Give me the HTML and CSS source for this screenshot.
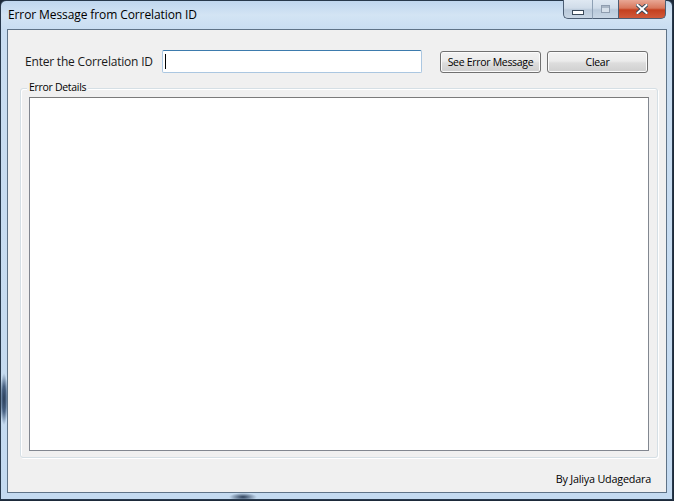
FILE: index.html
```html
<!DOCTYPE html>
<html>
<head>
<meta charset="utf-8">
<title>Error Message from Correlation ID</title>
<link rel="stylesheet" href="styles.css">
</head>
<body>
<div class="window">
  <div class="titlebar">
    <span class="title">Error Message from Correlation ID</span>
    <div class="caption">
      <div class="cap cap-min"><span class="min-glyph"></span></div>
      <div class="cap cap-max"><span class="max-glyph"></span></div>
      <div class="cap cap-close">
        <svg width="12" height="10" viewBox="0 0 12 10">
          <path d="M1.5 1 L10.5 9 M10.5 1 L1.5 9" stroke="#3b4a5a" stroke-width="4" stroke-linecap="square"/>
          <path d="M1.5 1 L10.5 9 M10.5 1 L1.5 9" stroke="#ffffff" stroke-width="2" stroke-linecap="square"/>
        </svg>
      </div>
    </div>
  </div>
  <div class="client">
    <div class="input-row">
      <label class="id-label">Enter the Correlation ID</label>
      <div class="textbox"><span class="caret"></span></div>
      <button class="btn btn-see">See Error Message</button>
      <button class="btn btn-clear">Clear</button>
    </div>
    <div class="group">
      <span class="legend">Error Details</span>
      <div class="details"></div>
    </div>
    <div class="footer">By Jaliya Udagedara</div>
  </div>
</div>
</body>
</html>
```
FILE: styles.css
```css
html, body {
  margin: 0;
  padding: 0;
}
body {
  width: 674px;
  height: 501px;
  background: #1d2a3a;
  overflow: hidden;
  font-family: "Open Sans", "Noto Sans", sans-serif;
}
.window {
  box-sizing: border-box;
  width: 673px;
  height: 500px;
  border: 1px solid #27384b;
  border-radius: 6px 6px 0 0;
  background:
    radial-gradient(ellipse 4px 26px at 3px 398px, #2b3e58 0%, #4a6384 50%, rgba(196,218,240,0) 100%),
    radial-gradient(ellipse 14px 4px at 242px 496px, #2b3e58 0%, rgba(196,218,240,0) 100%),
    linear-gradient(180deg, #bfd6ee 0px, #d3e4f4 14px, #c9ddf1 28px, #c4daf0 100%);
  padding: 0 5px 6px 6px;
  display: flex;
  flex-direction: column;
}
.titlebar {
  height: 28px;
  display: flex;
  align-items: flex-start;
  position: relative;
}
.title {
  font-size: 12px;
  color: #000;
  margin-left: 1px;
  margin-top: 5px;
  letter-spacing: -0.1px;
}
.caption {
  display: flex;
  margin-left: auto;
  margin-top: -1px;
  margin-right: 1px;
}
.cap {
  height: 19px;
  box-sizing: border-box;
  border: 1px solid #4c5e74;
  border-top: none;
  display: flex;
  align-items: center;
  justify-content: center;
}
.cap-min {
  width: 29px;
  border-radius: 0 0 0 5px;
  border-right: none;
  background: linear-gradient(180deg, #dfe8f2 0%, #d0dce9 45%, #b9c9da 55%, #c8d6e4 100%);
}
.cap-max {
  width: 26px;
  border-right: none;
  border-left: 1px solid #8ea0b4;
  background: linear-gradient(180deg, #dfe8f2 0%, #d0dce9 45%, #b9c9da 55%, #c8d6e4 100%);
}
.cap-close {
  width: 48px;
  border-radius: 0 0 5px 0;
  background: linear-gradient(180deg, #e8a795 0%, #d8775c 45%, #c4401f 55%, #d15a3a 100%);
}
.min-glyph {
  display: block;
  width: 10px;
  height: 3px;
  margin-top: 6px;
  background: #fff;
  border: 1px solid #3b4a5a;
}
.max-glyph {
  display: block;
  width: 7px;
  height: 6px;
  border: 1px solid #8f9daf;
  box-shadow: inset 0 2px 0 #aab7c6;
  background: #d6e0ea;
}
.client {
  flex: 1;
  border: 1px solid #5f7387;
  background: #f0f0f0;
  display: flex;
  flex-direction: column;
  padding: 20px 8px 0 12px;
}
.input-row {
  display: flex;
  align-items: center;
  height: 23px;
  padding-left: 5px;
}
.id-label {
  flex: none;
  width: 137px;
  font-size: 12px;
  color: #1a1a1a;
  letter-spacing: -0.2px;
}
.textbox {
  flex: none;
  box-sizing: border-box;
  width: 260px;
  height: 23px;
  background: #fff;
  border: 1px solid #abc7e1;
  border-top-color: #3d7bad;
  border-radius: 2px;
  display: flex;
  align-items: center;
  padding-left: 2px;
}
.caret {
  display: block;
  width: 1px;
  height: 15px;
  background: #000;
}
.btn {
  flex: none;
  box-sizing: border-box;
  width: 101px;
  height: 22px;
  border: 1px solid #707070;
  border-radius: 3px;
  background: linear-gradient(180deg, #f2f2f2 0%, #ebebeb 45%, #dddddd 55%, #cfcfcf 100%);
  box-shadow: inset 0 0 0 1px #fbfbfb;
  font-family: "Open Sans", "Noto Sans", sans-serif;
  font-size: 10.5px;
  letter-spacing: -0.3px;
  color: #000;
  padding: 0;
}
.btn-see {
  margin-left: 18px;
}
.btn-clear {
  margin-left: 6px;
}
.group {
  position: relative;
  box-sizing: border-box;
  margin-top: 15px;
  height: 370px;
  border: 1px solid #d5dfe5;
  border-radius: 3px;
  box-shadow: inset 1px 1px 0 #ffffff, 1px 1px 0 #ffffff;
  padding: 8px 8px 6px 8px;
}
.legend {
  position: absolute;
  top: -9px;
  left: 6px;
  padding: 0 2px 0 2px;
  background: #f0f0f0;
  font-size: 10.5px;
  letter-spacing: -0.3px;
  color: #000;
  line-height: 14px;
}
.details {
  box-sizing: border-box;
  height: 354px;
  background: #fff;
  border: 1px solid #828790;
  border-top-color: #7a7a7a;
}
.footer {
  flex: 1;
  display: flex;
  align-items: center;
  justify-content: flex-end;
  padding-right: 7px;
  padding-top: 7px;
  font-size: 10.8px;
  letter-spacing: -0.2px;
  color: #000;
}
```
